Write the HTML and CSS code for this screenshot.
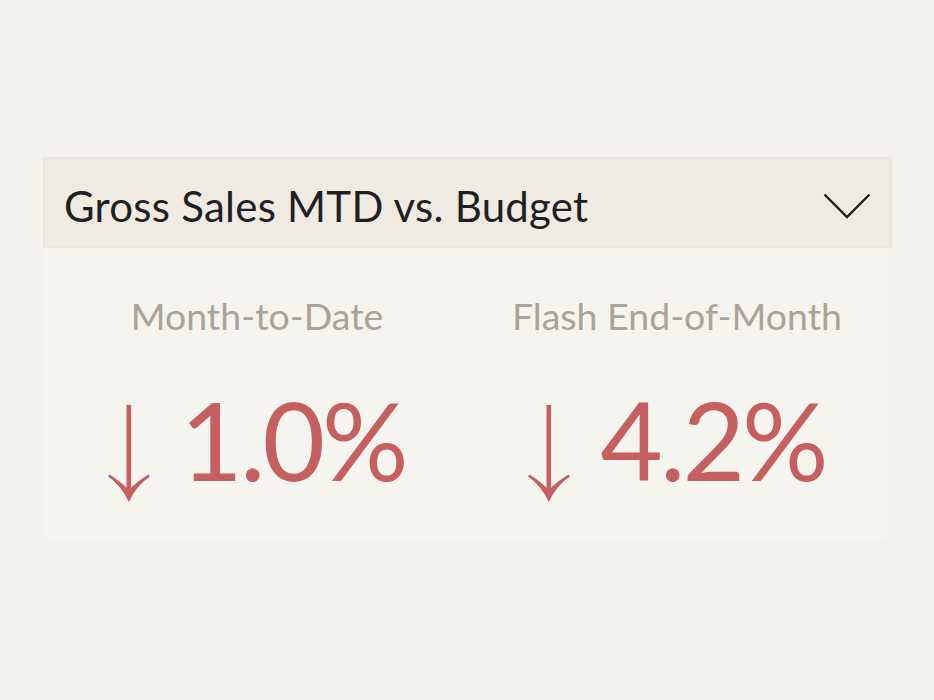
FILE: index.html
```html
<!DOCTYPE html>
<html lang="en">
<head>
<meta charset="utf-8">
<title>Gross Sales MTD vs. Budget</title>
<link rel="stylesheet" href="styles.css">
</head>
<body>
<div class="widget">
  <div class="header">
    <span class="title">Gross Sales MTD vs. Budget</span>
    <svg class="chevron" width="48" height="26" viewBox="0 0 48 26" aria-hidden="true">
      <path d="M1.5 1.5 L24 24 L46.5 1.5" fill="none" stroke="#1f1f24" stroke-width="2.4"/>
    </svg>
  </div>
  <div class="body">
    <div class="metric">
      <div class="label">Month-to-Date</div>
      <div class="value">
        <svg class="arrow" width="42" height="98" viewBox="0 0 42 98" aria-hidden="true">
          <rect x="18.5" y="0" width="4.6" height="88" fill="#c65f5f"/>
          <path d="M20.8 97 Q13 80 0 71.5 L1.6 69.6 Q13 77 20.8 85 Q28.6 77 40.4 69.6 L42 71.5 Q28.6 80 20.8 97 Z" fill="#c65f5f"/>
        </svg>
        <span class="num">1.0%</span>
      </div>
    </div>
    <div class="metric">
      <div class="label">Flash End-of-Month</div>
      <div class="value">
        <svg class="arrow" width="42" height="98" viewBox="0 0 42 98" aria-hidden="true">
          <rect x="18.5" y="0" width="4.6" height="88" fill="#c65f5f"/>
          <path d="M20.8 97 Q13 80 0 71.5 L1.6 69.6 Q13 77 20.8 85 Q28.6 77 40.4 69.6 L42 71.5 Q28.6 80 20.8 97 Z" fill="#c65f5f"/>
        </svg>
        <span class="num">4.2%</span>
      </div>
    </div>
  </div>
</div>
</body>
</html>
```
FILE: styles.css
```css
html, body {
  margin: 0;
  padding: 0;
  background: #f4f2ec;
}
body {
  font-family: Lato, "Noto Sans", sans-serif;
  padding: 157px 42px 0 43px;
}
.widget {
  width: 849px;
}
.header {
  box-sizing: border-box;
  height: 91px;
  background: #efebe2;
  border: 2px solid #e9e7e2;
  display: flex;
  align-items: center;
  justify-content: space-between;
  padding: 0 19px 0 19px;
}
.title {
  font-size: 42px;
  color: #1f1f24;
  font-weight: 400;
  letter-spacing: 0.25px;
  margin-top: 6px;
}
.chevron {
  display: block;
  margin-top: 7px;
}
.body {
  box-sizing: border-box;
  width: 844px;
  height: 292px;
  padding-left: 4px;
  background: #f5f4ef;
  display: grid;
  grid-template-columns: 1fr 1fr;
}
.metric {
  display: flex;
  flex-direction: column;
  align-items: center;
}
.label {
  margin-top: 45px;
  font-size: 37.5px;
  line-height: 46px;
  color: #aaa399;
}
.value {
  margin-top: 50px;
  display: flex;
  align-items: flex-start;
  gap: 30px;
}
.arrow {
  display: block;
  margin-top: 16px;
}
.num {
  font-size: 108px;
  line-height: 100px;
  letter-spacing: -3px;
  color: #c65f5f;
}
```
